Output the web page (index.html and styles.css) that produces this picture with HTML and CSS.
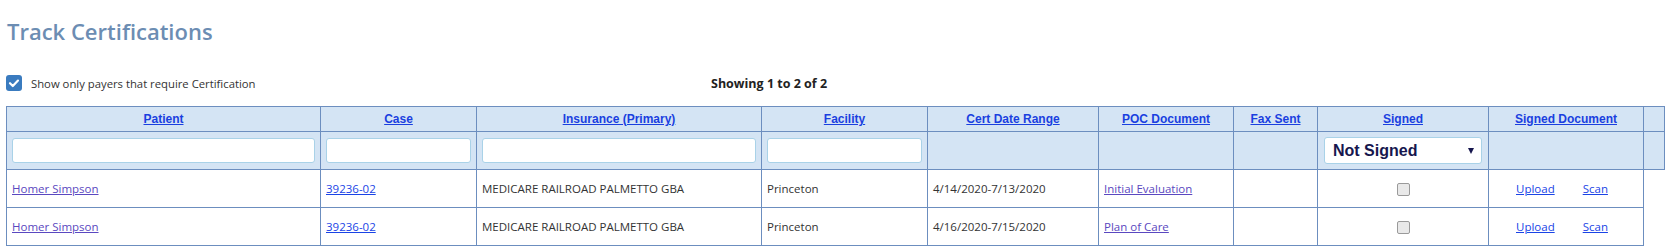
FILE: index.html
```html
<!DOCTYPE html>
<html>
<head>
<meta charset="utf-8">
<link rel="stylesheet" href="styles.css">
</head>
<body>
<div class="page">
  <h1 class="title">Track Certifications</h1>
  <div class="toolbar">
    <label class="only">
      <span class="cbox"><svg width="16" height="16" viewBox="0 0 16 16"><path d="M4 8.2 L6.8 11 L12 5.6" fill="none" stroke="#fff" stroke-width="2.2" stroke-linecap="round" stroke-linejoin="round"/></svg></span>
      <span class="only-text">Show only payers that require Certification</span>
    </label>
    <div class="showing">Showing 1 to 2 of 2</div>
  </div>
  <table class="grid head">
    <colgroup>
      <col class="c1"><col class="c2"><col class="c3"><col class="c4"><col class="c5"><col class="c6"><col class="c7"><col class="c8"><col class="c9"><col class="c10">
    </colgroup>
    <tr class="hrow">
      <th><a href="#">Patient</a></th>
      <th><a href="#">Case</a></th>
      <th><a href="#">Insurance (Primary)</a></th>
      <th><a href="#">Facility</a></th>
      <th><a href="#">Cert Date Range</a></th>
      <th><a href="#">POC Document</a></th>
      <th><a href="#">Fax Sent</a></th>
      <th><a href="#">Signed</a></th>
      <th><a href="#">Signed Document</a></th>
      <th></th>
    </tr>
    <tr class="frow">
      <td><input class="flt" type="text"></td>
      <td><input class="flt" type="text"></td>
      <td><input class="flt" type="text"></td>
      <td><input class="flt" type="text"></td>
      <td></td>
      <td></td>
      <td></td>
      <td>
        <div class="sel">
          <span class="sel-text">Not Signed</span>
          <span class="sel-arrow"></span>
        </div>
      </td>
      <td></td>
      <td></td>
    </tr>
  </table>
  <table class="grid body">
    <colgroup>
      <col class="c1"><col class="c2"><col class="c3"><col class="c4"><col class="c5"><col class="c6"><col class="c7"><col class="c8"><col class="c9">
    </colgroup>
    <tr class="drow">
      <td><a class="visited" href="#">Homer Simpson</a></td>
      <td><a href="#">39236-02</a></td>
      <td>MEDICARE RAILROAD PALMETTO GBA</td>
      <td>Princeton</td>
      <td>4/14/2020-7/13/2020</td>
      <td><a class="visited" href="#">Initial Evaluation</a></td>
      <td></td>
      <td class="center"><span class="ucb"></span></td>
      <td class="docs"><a href="#">Upload</a><a href="#">Scan</a></td>
    </tr>
    <tr class="drow">
      <td><a class="visited" href="#">Homer Simpson</a></td>
      <td><a href="#">39236-02</a></td>
      <td>MEDICARE RAILROAD PALMETTO GBA</td>
      <td>Princeton</td>
      <td>4/16/2020-7/15/2020</td>
      <td><a class="visited" href="#">Plan of Care</a></td>
      <td></td>
      <td class="center"><span class="ucb"></span></td>
      <td class="docs"><a href="#">Upload</a><a href="#">Scan</a></td>
    </tr>
  </table>
</div>
</body>
</html>
```
FILE: styles.css
```css
html, body {
  margin: 0;
  padding: 0;
  background: #fff;
}
body {
  font-family: "Open Sans", "Noto Sans", sans-serif;
  color: #333;
}
.page {
  padding: 0 6px;
}
.title {
  margin: 0;
  padding-top: 15px;
  padding-left: 1px;
  font-size: 22px;
  line-height: 32px;
  font-weight: 600;
  color: #6c8db3;
}
.toolbar {
  display: flex;
  align-items: center;
  margin-top: 26px;
  height: 20px;
}
.only {
  display: flex;
  align-items: center;
  gap: 9px;
  width: 705px;
}
.cbox {
  width: 16px;
  height: 16px;
  border-radius: 3px;
  background: #3a7bbf;
  display: block;
}
.cbox svg { display: block; }
.only-text {
  font-size: 11.3px;
  color: #333;
}
.showing {
  font-weight: 700;
  font-size: 12.5px;
  color: #222;
}
.grid {
  border-collapse: collapse;
  table-layout: fixed;
}
.grid.head {
  margin-top: 13px;
  width: 1659px;
}
.grid.body {
  width: 1638px;
  margin-top: -1px;
}
.c1 { width: 314px; }
.c2 { width: 156px; }
.c3 { width: 285px; }
.c4 { width: 166px; }
.c5 { width: 171px; }
.c6 { width: 135px; }
.c7 { width: 84px; }
.c8 { width: 171px; }
.c9 { width: 155px; }
.c10 { width: 21px; }
.grid th, .grid td {
  border: 1px solid #6c8ebf;
  padding: 0 5px;
}
.head th, .head td {
  background: #d4e4f4;
}
.hrow th {
  height: 24px;
  font-family: "Liberation Sans", Arial, sans-serif;
  font-weight: 700;
  font-size: 12px;
  text-align: center;
}
.hrow a {
  color: #1a3fe0;
}
.frow td {
  height: 37px;
}
.flt {
  display: block;
  box-sizing: border-box;
  width: 100%;
  height: 25px;
  border: 1px solid #a9d2e8;
  border-radius: 3px;
  background: #fff;
  margin: 0;
  padding: 0 4px;
}
.sel {
  box-sizing: border-box;
  height: 27px;
  margin: 0 1px;
  border: 1px solid #a9d2e8;
  border-radius: 3px;
  background: #fff;
  display: flex;
  align-items: center;
  justify-content: space-between;
  padding: 0 7px 0 8px;
}
.sel-text {
  font-family: "Liberation Sans", Arial, sans-serif;
  font-weight: 700;
  font-size: 16px;
  color: #16164e;
}
.sel-arrow {
  width: 0;
  height: 0;
  border-left: 3px solid transparent;
  border-right: 3px solid transparent;
  border-top: 6px solid #16164e;
}
.drow td {
  height: 37px;
  font-size: 11.5px;
  color: #333;
  white-space: nowrap;
}
.drow a {
  color: #1a44e6;
}
.drow a.visited {
  color: #5a48c0;
}
.center {
  text-align: center;
}
.ucb {
  display: inline-block;
  vertical-align: middle;
  width: 11px;
  height: 11px;
  border: 1px solid #9a9a9a;
  border-radius: 2px;
  background: #e9e9e9;
}
.docs {
  padding-left: 27px !important;
}
.docs a {
  margin-right: 28px;
}
```
